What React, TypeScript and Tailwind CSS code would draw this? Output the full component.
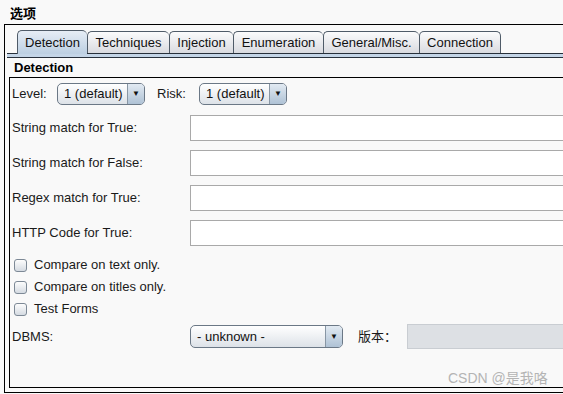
import type { ReactNode } from "react";

const font = { fontFamily: '"Liberation Sans", Arial, "Noto Sans CJK SC", sans-serif' };

const tabs = [
  { label: "Detection", w: "w-[70px]" },
  { label: "Techniques", w: "w-[82px]" },
  { label: "Injection", w: "w-[64px]" },
  { label: "Enumeration", w: "w-[90px]" },
  { label: "General/Misc.", w: "w-[96px]" },
  { label: "Connection", w: "w-[82px]" },
];

function Combo({ value, className }: { value: string; className: string }) {
  return (
    <div
      className={`flex items-stretch rounded-[5px] border border-[#6b7886] bg-gradient-to-b from-[#ffffff] to-[#dde2e8] ${className}`}
    >
      <div className="flex flex-1 items-center pl-[6px] text-[13px] text-[#111]">{value}</div>
      <div className="flex w-[17px] items-center justify-center rounded-r-[4px] border-l border-[#8896a4] bg-gradient-to-b from-[#e2eaf2] to-[#afc2d5]">
        <span className="text-[8px] leading-none text-[#111]">▼</span>
      </div>
    </div>
  );
}

function Field({ label }: { label: string }) {
  return (
    <div className="flex h-[26px] items-center">
      <div className="w-[180px] pl-[2px] text-[13px] text-[#1a1a1a]">{label}</div>
      <div className="h-[26px] w-[400px] border border-[#a9a9a9] bg-white" />
    </div>
  );
}

function Check({ children }: { children: ReactNode }) {
  return (
    <div className="flex h-[22px] items-center">
      <div className="ml-[4px] h-[13px] w-[13px] rounded-[3px] border border-[#7d8996] bg-gradient-to-b from-[#fdfdfd] to-[#d5dbe2]" />
      <span className="ml-[7px] text-[13px] text-[#1a1a1a]">{children}</span>
    </div>
  );
}

export default function App() {
  return (
    <div className="relative h-[394px] w-[563px] overflow-hidden bg-[#f9f9f9]" style={font}>
      {/* Title */}
      <div className="h-[24px] pl-[10px] pt-[6px] text-[13px] font-bold leading-[16px] text-black">选项</div>

      {/* Outer frame */}
      <div className="ml-[4px] h-[369px] w-[600px] border-b border-l border-t border-black">
        {/* Tab strip */}
        <div className="ml-[2px]">
          <div className="flex h-[28px] items-end pl-[10px]">
            {tabs.map((t, i) => {
              const selected = i === 0;
              return (
                <div
                  key={t.label}
                  className={`flex items-center justify-center rounded-t-[5px] border-l border-t border-[#4f5b68] text-[13px] text-[#111] ${t.w} ${
                    i === tabs.length - 1 ? "border-r" : ""
                  } ${
                    selected
                      ? "relative z-10 -mb-px h-[24px] bg-gradient-to-b from-[#e6edf5] to-[#bccfe2]"
                      : "h-[22px] bg-gradient-to-b from-[#fbfbfc] to-[#d9dbe0]"
                  }`}
                >
                  {t.label}
                </div>
              );
            })}
          </div>
          <div className="h-[5px] w-full border-b border-t border-[#27303b] bg-[#c4d5e7]" />
        </div>

        {/* Group label */}
        <div className="h-[19px] pl-[9px] text-[13px] font-bold leading-[19px] text-black">Detection</div>

        {/* Inner box */}
        <div className="relative ml-[4px] h-[311px] w-[600px] border border-black">
          <div className="pt-[5px]">
            <div className="flex h-[22px] items-center">
              <div className="w-[47px] pl-[2px] text-[13px] text-[#1a1a1a]">Level:</div>
              <Combo value="1 (default)" className="h-[22px] w-[88px]" />
              <div className="ml-[12px] w-[42px] text-[13px] text-[#1a1a1a]">Risk:</div>
              <Combo value="1 (default)" className="h-[22px] w-[88px]" />
            </div>

            <div className="mt-[10px] flex flex-col gap-[9px]">
              <Field label="String match for True:" />
              <Field label="String match for False:" />
              <Field label="Regex match for True:" />
              <Field label="HTTP Code for True:" />
            </div>

            <div className="mt-[8px] flex flex-col">
              <Check>Compare on text only.</Check>
              <Check>Compare on titles only.</Check>
              <Check>Test Forms</Check>
            </div>

            <div className="mt-[4px] flex h-[25px] items-center">
              <div className="w-[180px] pl-[2px] text-[13px] text-[#1a1a1a]">DBMS:</div>
              <Combo value="- unknown -" className="h-[23px] w-[153px]" />
              <div className="ml-[15px] w-[49px] text-[13px] text-[#1a1a1a]">版本：</div>
              <div className="h-[25px] w-[200px] border border-[#c9cdd2] bg-[#dde0e4]" />
            </div>
          </div>

          {/* Watermark */}
          <div className="absolute left-[438px] top-[290px] text-[14px] text-[#b4b4b4]">CSDN @是我咯</div>
        </div>
      </div>
    </div>
  );
}
